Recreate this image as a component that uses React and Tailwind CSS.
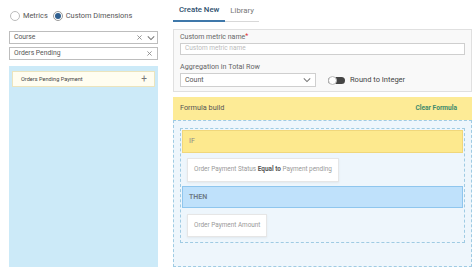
import React from 'react';

const font = { fontFamily: 'Roboto, "Noto Sans", sans-serif' };

const XIcon = () => (
  <svg width="7" height="7" viewBox="0 0 10 10" className="text-[#888]">
    <path d="M2 2 L8 8 M8 2 L2 8" stroke="currentColor" strokeWidth="1.2" fill="none" />
  </svg>
);

const Chevron = () => (
  <svg width="8" height="6" viewBox="0 0 10 6" className="text-[#777]">
    <path d="M1 1 L5 5 L9 1" stroke="currentColor" strokeWidth="1.3" fill="none" />
  </svg>
);

const Radio = ({ checked, label }) => (
  <label className="flex items-center gap-[3px]">
    <span
      className={
        checked
          ? 'w-[10px] h-[10px] rounded-full border border-[#999] bg-white flex items-center justify-center'
          : 'w-[10px] h-[10px] rounded-full border border-[#bbb] bg-white'
      }
    >
      {checked && <span className="w-[6px] h-[6px] rounded-full bg-[#2f5f8f]" />}
    </span>
    <span className="text-[7.4px] text-[#555]">{label}</span>
  </label>
);

const LeftPanel = () => (
  <div className="w-[149px] flex flex-col shrink-0">
    <div className="flex items-center gap-[5px] pt-[10px] pl-[1px] h-[21px]">
      <Radio label="Metrics" />
      <Radio checked label="Custom Dimensions" />
    </div>

    <div className="mt-[10px] h-[13px] border border-[#bdbdbd] bg-white flex items-center pl-[4px] pr-[2px]">
      <span className="text-[6.8px] text-[#555] flex-1">Course</span>
      <XIcon />
      <span className="w-[4px]" />
      <Chevron />
    </div>
    <div className="mt-[3px] h-[13px] border border-[#bdbdbd] bg-white flex items-center pl-[4px] pr-[4px]">
      <span className="text-[6.8px] text-[#555] flex-1">Orders Pending</span>
      <XIcon />
    </div>

    <div className="mt-[6px] flex-1 bg-[#cceaf8] px-[3px] pt-[5px]">
      <div className="h-[16px] bg-[#fffdf0] border border-[#ebe4bd] flex items-center pl-[8px] pr-[7px]">
        <span className="text-[5.6px] text-[#444] flex-1">Orders Pending Payment</span>
        <span className="text-[10px] leading-none text-[#777]">+</span>
      </div>
    </div>
  </div>
);

const Tabs = () => (
  <div className="flex h-[22px] items-end">
    <div className="px-[6px] h-full flex items-center border-b-2 border-[#3f78aa]">
      <span className="text-[7.8px] font-medium text-[#2d4f6e]">Create New</span>
    </div>
    <div className="px-[5px] h-full flex items-center border-b border-[#d8d8d8]">
      <span className="text-[7.8px] text-[#777]">Library</span>
    </div>
  </div>
);

const MetricForm = () => (
  <div className="mt-[7px] border border-[#e0e0e0] bg-[#f9f9f9] px-[6px] pt-[2px] pb-[4px]">
    <div className="text-[7px] text-[#666] h-[11px] flex items-center">
      Custom metric name<span className="text-[#d33] -mt-[3px]">*</span>
    </div>
    <div className="h-[12px] border border-[#cfcfcf] bg-white flex items-center pl-[4px]">
      <span className="text-[6.5px] text-[#bbb]">Custom metric name</span>
    </div>
    <div className="mt-[7px] text-[7.2px] text-[#666] h-[11px] flex items-center">
      Aggregation in Total Row
    </div>
    <div className="flex items-center">
      <div className="w-[136px] h-[14px] border border-[#cfcfcf] bg-white flex items-center pl-[4px] pr-[4px]">
        <span className="text-[7px] text-[#555] flex-1">Count</span>
        <Chevron />
      </div>
      <div className="ml-[12px] w-[17px] h-[7px] rounded-full bg-[#454545] relative">
        <span className="absolute left-0 top-[-1px] w-[9px] h-[9px] rounded-full bg-white border border-[#bbb]" />
      </div>
      <span className="ml-[5px] text-[7.5px] text-[#444]">Round to Integer</span>
    </div>
  </div>
);

const Card = ({ h, children }) => (
  <div className="flex">
    <div className={`${h} flex items-center px-[6px] bg-white border border-[#e6e6e6] shadow-[0_1px_2px_rgba(0,0,0,0.06)]`}>
      <span className="text-[6.4px] text-[#999]">{children}</span>
    </div>
  </div>
);

const FormulaBuild = () => (
  <div className="mt-[5px] flex-1 flex flex-col">
    <div className="h-[23px] bg-[#fdeb96] flex items-center pl-[7px] pr-[15px]">
      <span className="text-[7.3px] text-[#555] flex-1">Formula build</span>
      <span className="text-[6.6px] font-bold text-[#3f8a6c]">Clear Formula</span>
    </div>
    <div className="flex-1 border border-dashed border-[#9fcbe3] bg-[#eef6fc] px-[6px] pt-[7px]">
      <div className="border border-dashed border-[#9fcbe3] p-[1px] pb-[5px]">
        <div className="h-[23px] bg-[#fde98e] border border-[#f0d77b] flex items-center pl-[6px]">
          <span className="text-[7px] text-[#888]">IF</span>
        </div>
        <div className="px-[5px] pt-[5px] pb-[4px]">
          <Card h="h-[24px]">
            Order Payment Status <b className="font-bold text-[#555]">Equal to</b> Payment pending
          </Card>
        </div>
        <div className="h-[22px] bg-[#bfe1fb] border border-[#8fc6ee] flex items-center pl-[6px]">
          <span className="text-[7px] font-semibold text-[#6b7785]">THEN</span>
        </div>
        <div className="px-[5px] pt-[6px]">
          <Card h="h-[23px]">Order Payment Amount</Card>
        </div>
      </div>
    </div>
  </div>
);

export default function App() {
  return (
    <div className="w-[474px] h-[267px] overflow-hidden bg-white flex pl-[9px]" style={font}>
      <LeftPanel />
      <div className="ml-[15px] w-[299px] flex flex-col">
        <Tabs />
        <MetricForm />
        <FormulaBuild />
      </div>
    </div>
  );
}
